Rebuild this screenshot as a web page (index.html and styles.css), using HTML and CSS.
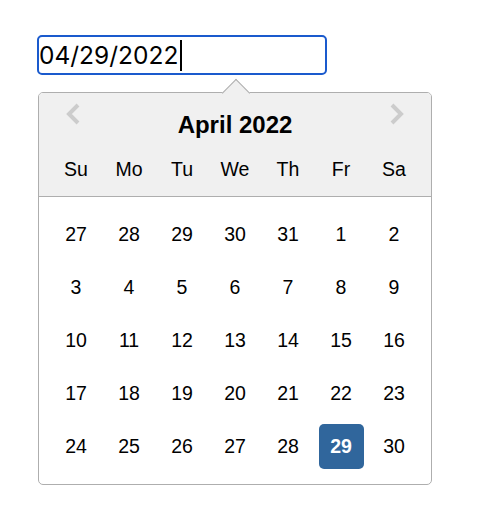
FILE: index.html
```html
<!DOCTYPE html>
<html>
<head>
<meta charset="utf-8">
<link rel="stylesheet" href="styles.css">
</head>
<body>
<div class="page">
  <div class="date-input"><span class="value">04/29/2022</span><span class="caret"></span></div>
  <div class="calendar">
    <div class="pointer"></div>
    <div class="header">
      <span class="nav nav-prev"><svg width="16" height="22" viewBox="0 0 16 22"><polyline points="13,2 4,11 13,20" fill="none" stroke="#cccccc" stroke-width="4"/></svg></span>
      <span class="nav nav-next"><svg width="16" height="22" viewBox="0 0 16 22"><polyline points="3,2 12,11 3,20" fill="none" stroke="#cccccc" stroke-width="4"/></svg></span>
      <div class="title">April 2022</div>
      <div class="week names">
        <div class="cell">Su</div><div class="cell">Mo</div><div class="cell">Tu</div><div class="cell">We</div><div class="cell">Th</div><div class="cell">Fr</div><div class="cell">Sa</div>
      </div>
    </div>
    <div class="month">
      <div class="week"><div class="cell">27</div><div class="cell">28</div><div class="cell">29</div><div class="cell">30</div><div class="cell">31</div><div class="cell">1</div><div class="cell">2</div></div>
      <div class="week"><div class="cell">3</div><div class="cell">4</div><div class="cell">5</div><div class="cell">6</div><div class="cell">7</div><div class="cell">8</div><div class="cell">9</div></div>
      <div class="week"><div class="cell">10</div><div class="cell">11</div><div class="cell">12</div><div class="cell">13</div><div class="cell">14</div><div class="cell">15</div><div class="cell">16</div></div>
      <div class="week"><div class="cell">17</div><div class="cell">18</div><div class="cell">19</div><div class="cell">20</div><div class="cell">21</div><div class="cell">22</div><div class="cell">23</div></div>
      <div class="week"><div class="cell">24</div><div class="cell">25</div><div class="cell">26</div><div class="cell">27</div><div class="cell">28</div><div class="cell selected">29</div><div class="cell">30</div></div>
    </div>
  </div>
</div>
</body>
</html>
```
FILE: styles.css
```css
* { box-sizing: border-box; }
html, body { margin: 0; padding: 0; background: #ffffff; }
.page {
  padding: 35px 0 0 37px;
  font-family: "Liberation Sans", Arial, sans-serif;
  color: #000;
}
.date-input {
  width: 290px;
  height: 40px;
  border: 2px solid #1a5acd;
  border-radius: 5px;
  display: flex;
  align-items: center;
  padding-left: 0;
  font-family: Inter, "Liberation Sans", sans-serif;
  font-size: 24.5px;
}
.caret {
  display: inline-block;
  width: 1.5px;
  height: 31px;
  background: #000;
  margin-left: 2px;
}
.calendar {
  position: relative;
  width: 394px;
  margin: 17px 0 0 1px;
  border: 1px solid #aeaeae;
  border-radius: 5px;
  background: #fff;
}
.pointer {
  position: absolute;
  left: 187px;
  top: -10.5px;
  width: 20px;
  height: 20px;
  background: #f0f0f0;
  border-top: 1px solid #aeaeae;
  border-left: 1px solid #aeaeae;
  transform: rotate(45deg);
  z-index: 2;
}
.header {
  position: relative;
  background: #f0f0f0;
  border-bottom: 1px solid #aeaeae;
  border-top-left-radius: 4px;
  border-top-right-radius: 4px;
  padding: 13px 10.5px 0;
}
.nav {
  position: absolute;
  top: 10px;
  line-height: 0;
  z-index: 3;
}
.nav-prev { left: 26px; }
.nav-next { right: 26px; }
.title {
  text-align: center;
  font-weight: bold;
  font-size: 24px;
  line-height: 37px;
}
.month {
  margin: 11px 10.5px;
}
.week {
  display: flex;
}
.cell {
  width: 45px;
  height: 45px;
  margin: 4px;
  line-height: 45px;
  text-align: center;
  font-size: 19.5px;
}
.selected {
  background: #30669c;
  color: #fff;
  font-weight: bold;
  border-radius: 5px;
}
```
